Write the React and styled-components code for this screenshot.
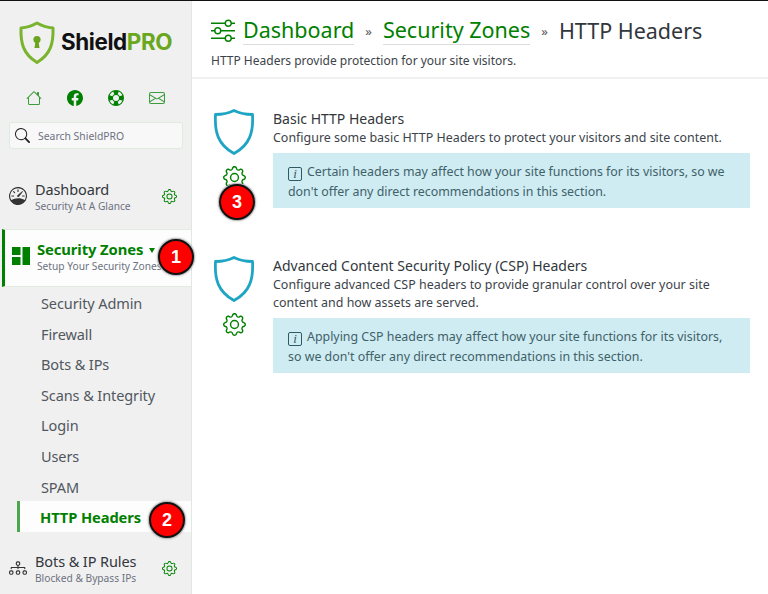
import React from 'react';
import styled, { createGlobalStyle } from 'styled-components';
import {
  BsHouse,
  BsFacebook,
  BsLifePreserver,
  BsEnvelope,
  BsSearch,
  BsSpeedometer,
  BsGear,
  BsDiagram3,
  BsSliders,
} from 'react-icons/bs';

const GlobalStyle = createGlobalStyle`
  html, body {
    margin: 0;
    padding: 0;
    height: 100%;
    overflow: hidden;
    background: #fff;
  }
  * {
    box-sizing: border-box;
  }
`;

const green = '#008000';
const FONT = '"Noto Sans", "Open Sans", sans-serif';

const Page = styled.div`
  width: 768px;
  height: 594px;
  display: flex;
  overflow: hidden;
  border-top: 1px solid #111;
  font-family: ${FONT};
  color: #32373c;
`;

const Sidebar = styled.aside`
  width: 192px;
  flex: none;
  background: #f0f0f0;
  border-right: 1px solid #dfe9df;
  padding-top: 19px;
`;

const Logo = styled.div`
  display: flex;
  align-items: center;
  gap: 6px;
  padding-left: 19px;
  height: 45px;
`;

const LogoName = styled.span`
  font-family: Inter, sans-serif;
  font-weight: 700;
  font-size: 22.4px;
  letter-spacing: -0.4px;
  margin-bottom: 3px;
  color: #111;
`;

const LogoPro = styled.span`
  color: #69a71d;
`;

const QuickLinks = styled.div`
  display: flex;
  justify-content: space-between;
  padding: 25px 26px 0 26px;
  height: 57px;
  color: ${green};
`;

const QuickLink = styled.span`
  width: 16px;
  height: 16px;
  display: flex;
  font-size: 16px;
  opacity: ${(p) => (p.$light ? 0.75 : 1)};
`;

const Search = styled.div`
  margin: 0 8px 0 9px;
  height: 27px;
  display: flex;
  align-items: center;
  gap: 8px;
  padding-left: 5px;
  background: #f8f8f8;
  border: 1px solid #e0ebe0;
  border-radius: 3px;
  font-size: 10.4px;
  color: #6c7280;
`;

const NavItem = styled.div`
  position: relative;
  display: flex;
  align-items: center;
  height: ${(p) => p.$height}px;
  padding-left: ${(p) => (p.$active ? 7 : 9)}px;
  padding-bottom: ${(p) => (p.$active ? 5 : 0)}px;
  margin-top: ${(p) => p.$top || 0}px;
  margin-left: ${(p) => (p.$active ? 2 : 0)}px;
  background: ${(p) => (p.$active ? '#fdfdfd' : 'transparent')};
  border-left: ${(p) => (p.$active ? `3px solid ${green}` : 'none')};
  border-top: ${(p) => (p.$active ? '1px solid #e2ebe2' : 'none')};
  border-bottom: ${(p) => (p.$active ? '1px solid #e2ebe2' : 'none')};
`;

const NavIcon = styled.span`
  width: 18px;
  height: 18px;
  flex: none;
  display: flex;
  font-size: 18px;
  margin-right: ${(p) => (p.$active ? 7 : 8)}px;
  color: ${(p) => (p.$active ? green : '#333')};
`;

const NavText = styled.div`
  flex: 1;
  min-width: 0;
  white-space: nowrap;
`;

const NavTitle = styled.div`
  font-size: ${(p) => (p.$active ? 14.8 : 14.5)}px;
  line-height: 19px;
  letter-spacing: -0.1px;
  font-weight: ${(p) => (p.$active ? 700 : 400)};
  color: ${(p) => (p.$active ? green : '#32373c')};
`;

const NavSub = styled.div`
  font-size: 10.2px;
  line-height: 12px;
  margin-top: 1px;
  color: #6c7280;
`;

const Caret = styled.span`
  display: inline-block;
  margin-left: 6px;
  vertical-align: 2px;
  border-left: 3px solid transparent;
  border-right: 3px solid transparent;
  border-top: 5px solid ${green};
`;

const NavGear = styled.span`
  display: flex;
  font-size: 15px;
  color: ${green};
  margin-right: 14px;
`;

const SubNav = styled.div`
  padding-top: 1px;
`;

const SubItem = styled.div`
  position: relative;
  height: ${(p) => (p.$active ? 31 : 30.6)}px;
  line-height: ${(p) => (p.$active ? 33 : 30)}px;
  margin-top: ${(p) => (p.$active ? -1 : 0)}px;
  font-size: ${(p) => (p.$active ? 14.7 : 14.5)}px;
  letter-spacing: -0.1px;
  white-space: nowrap;
  margin-left: 17px;
  color: ${(p) => (p.$active ? green : '#50575e')};
  font-weight: ${(p) => (p.$active ? 700 : 400)};
  padding-left: ${(p) => (p.$active ? 20 : 24)}px;
  background: ${(p) => (p.$active ? '#fdfdfd' : 'transparent')};
  border-left: ${(p) => (p.$active ? '3px solid #4ca64c' : 'none')};
`;

const Badge = styled.span`
  position: absolute;
  left: ${(p) => p.$left}px;
  top: ${(p) => p.$top}px;
  width: 36px;
  height: 36px;
  border-radius: 50%;
  background: #f00;
  border: 2px solid #111;
  box-shadow: 0 0 0 1px #bbb, 0 0 3px rgba(0, 0, 0, 0.5);
  color: #fff;
  font-family: "Liberation Sans", sans-serif;
  font-weight: 700;
  font-size: 18px;
  line-height: 1;
  display: flex;
  align-items: center;
  justify-content: center;
`;

const Main = styled.main`
  flex: 1;
  min-width: 0;
  background: #fff;
`;

const Header = styled.header`
  height: 78px;
  padding: 14px 0 0 19px;
  border-bottom: 2px solid #f0f0f0;
`;

const Crumbs = styled.div`
  display: flex;
  align-items: center;
  height: 30px;
  font-size: 21.5px;
  white-space: nowrap;
`;

const CrumbIcon = styled.span`
  display: flex;
  font-size: 24px;
  color: ${green};
  margin-right: 8px;
`;

const CrumbLink = styled.span`
  color: ${green};
  line-height: 28px;
  border-bottom: 1px solid #ddd;
`;

const CrumbSep = styled.span`
  font-size: 13px;
  color: #555;
  margin: 2px 11px 0;
`;

const CrumbCurrent = styled.span`
  color: #32373c;
`;

const HeaderNote = styled.div`
  font-size: 12px;
  line-height: 16px;
  margin-top: 8px;
  color: #3c434a;
`;

const Section = styled.section`
  display: flex;
  padding: ${(p) => p.$top}px 18px 0 20px;
`;

const SectionIcons = styled.div`
  position: relative;
  width: 44px;
  flex: none;
  margin-right: 17px;
  display: flex;
  flex-direction: column;
  align-items: center;
  gap: 11px;
  color: ${green};
`;

const SectionBody = styled.div`
  flex: 1;
  min-width: 0;
`;

const SectionTitle = styled.div`
  font-size: 14px;
  line-height: 19px;
  color: #32373c;
`;

const SectionText = styled.div`
  font-size: 12.45px;
  line-height: 18px;
  margin-top: 1px;
  color: #3c434a;
`;

const Notice = styled.div`
  margin-top: 6px;
  padding: 9px 15px 6px;
  background: #cfecf3;
  color: #3f6168;
  font-size: 12.4px;
  line-height: 20px;
`;

const InfoMark = styled.span`
  display: inline-flex;
  align-items: center;
  justify-content: center;
  width: 14px;
  height: 14px;
  margin-right: 5px;
  vertical-align: -2px;
  border: 1px solid #2f5a63;
  border-radius: 2px;
  font-family: "Liberation Serif", serif;
  font-style: italic;
  font-size: 13px;
  line-height: 1;
  color: #2f5a63;
`;

const ShieldLogo = () => (
  <svg width="36" height="44" viewBox="0 0 36 44" fill="none">
    <path
      d="M18 2 C23 5 28 6.5 34 7 C34.5 22 32 33 18 41.5 C4 33 1.500 22 2 7 C8 6.500 13 5 18 2 Z"
      stroke="#7ab32e"
      strokeWidth="3"
      strokeLinejoin="round"
    />
    <circle cx="18" cy="18.500" r="3.600" fill="#6aa51d" />
    <path d="M16.500 20 h3 l1 7 h-5 z" fill="#6aa51d" />
  </svg>
);

const ShieldOutline = () => (
  <svg width="42" height="46" viewBox="0 0 42 46" fill="none">
    <path
      d="M21 1.500 C26 4 33 5.500 39.500 5.500 C40.500 23 37 36 21 44.500 C5 36 1.500 23 2.500 5.500 C9 5.500 16 4 21 1.500 Z"
      stroke="#1ea5c4"
      strokeWidth="2.800"
      strokeLinejoin="round"
    />
  </svg>
);

const ZonesIcon = () => (
  <svg width="18" height="18" viewBox="0 0 18 18" fill="currentColor">
    <rect x="0" y="0" width="8.500" height="8" />
    <rect x="0" y="10" width="8.500" height="8" />
    <rect x="10.500" y="0" width="7.500" height="18" />
  </svg>
);

const subItems = ['Security Admin', 'Firewall', 'Bots & IPs', 'Scans & Integrity', 'Login', 'Users', 'SPAM'];

const sections = [
  {
    title: 'Basic HTTP Headers',
    text: 'Configure some basic HTTP Headers to protect your visitors and site content.',
    notice: "Certain headers may affect how your site functions for its visitors, so we don't offer any direct recommendations in this section.",
    top: 30,
    badge: true,
  },
  {
    title: 'Advanced Content Security Policy (CSP) Headers',
    text: 'Configure advanced CSP headers to provide granular control over your site content and how assets are served.',
    notice: "Applying CSP headers may affect how your site functions for its visitors, so we don't offer any direct recommendations in this section.",
    top: 48,
  },
];

const App = () => (
  <>
    <GlobalStyle />
    <Page>
      <Sidebar>
        <Logo>
          <ShieldLogo />
          <LogoName>
            Shield<LogoPro>PRO</LogoPro>
          </LogoName>
        </Logo>
        <QuickLinks>
          <QuickLink $light><BsHouse /></QuickLink>
          <QuickLink><BsFacebook /></QuickLink>
          <QuickLink><BsLifePreserver /></QuickLink>
          <QuickLink $light><BsEnvelope /></QuickLink>
        </QuickLinks>
        <Search>
          <BsSearch size={15} color="#222" />
          Search ShieldPRO
        </Search>
        <NavItem $height={46} $top={24}>
          <NavIcon><BsSpeedometer /></NavIcon>
          <NavText>
            <NavTitle>Dashboard</NavTitle>
            <NavSub>Security At A Glance</NavSub>
          </NavText>
          <NavGear><BsGear /></NavGear>
        </NavItem>
        <NavItem $active $height={58} $top={10}>
          <NavIcon $active><ZonesIcon /></NavIcon>
          <NavText>
            <NavTitle $active>Security Zones<Caret /></NavTitle>
            <NavSub>Setup Your Security Zones</NavSub>
          </NavText>
          <Badge $left={153} $top={9}>1</Badge>
        </NavItem>
        <SubNav>
          {subItems.map((item) => (
            <SubItem key={item}>{item}</SubItem>
          ))}
          <SubItem $active>
            HTTP Headers
            <Badge $left={129} $top={1}>2</Badge>
          </SubItem>
        </SubNav>
        <NavItem $height={40} $top={16}>
          <NavIcon><BsDiagram3 /></NavIcon>
          <NavText>
            <NavTitle>Bots &amp; IP Rules</NavTitle>
            <NavSub>Blocked &amp; Bypass IPs</NavSub>
          </NavText>
          <NavGear><BsGear /></NavGear>
        </NavItem>
      </Sidebar>
      <Main>
        <Header>
          <Crumbs>
            <CrumbIcon><BsSliders /></CrumbIcon>
            <CrumbLink>Dashboard</CrumbLink>
            <CrumbSep>»</CrumbSep>
            <CrumbLink>Security Zones</CrumbLink>
            <CrumbSep>»</CrumbSep>
            <CrumbCurrent>HTTP Headers</CrumbCurrent>
          </Crumbs>
          <HeaderNote>HTTP Headers provide protection for your site visitors.</HeaderNote>
        </Header>
        {sections.map((s) => (
          <Section key={s.title} $top={s.top}>
            <SectionIcons>
              <ShieldOutline />
              <BsGear size={23} />
              {s.badge && <Badge $left={7} $top={75}>3</Badge>}
            </SectionIcons>
            <SectionBody>
              <SectionTitle>{s.title}</SectionTitle>
              <SectionText>{s.text}</SectionText>
              <Notice>
                <InfoMark>i</InfoMark>
                {s.notice}
              </Notice>
            </SectionBody>
          </Section>
        ))}
      </Main>
    </Page>
  </>
);

export default App;
